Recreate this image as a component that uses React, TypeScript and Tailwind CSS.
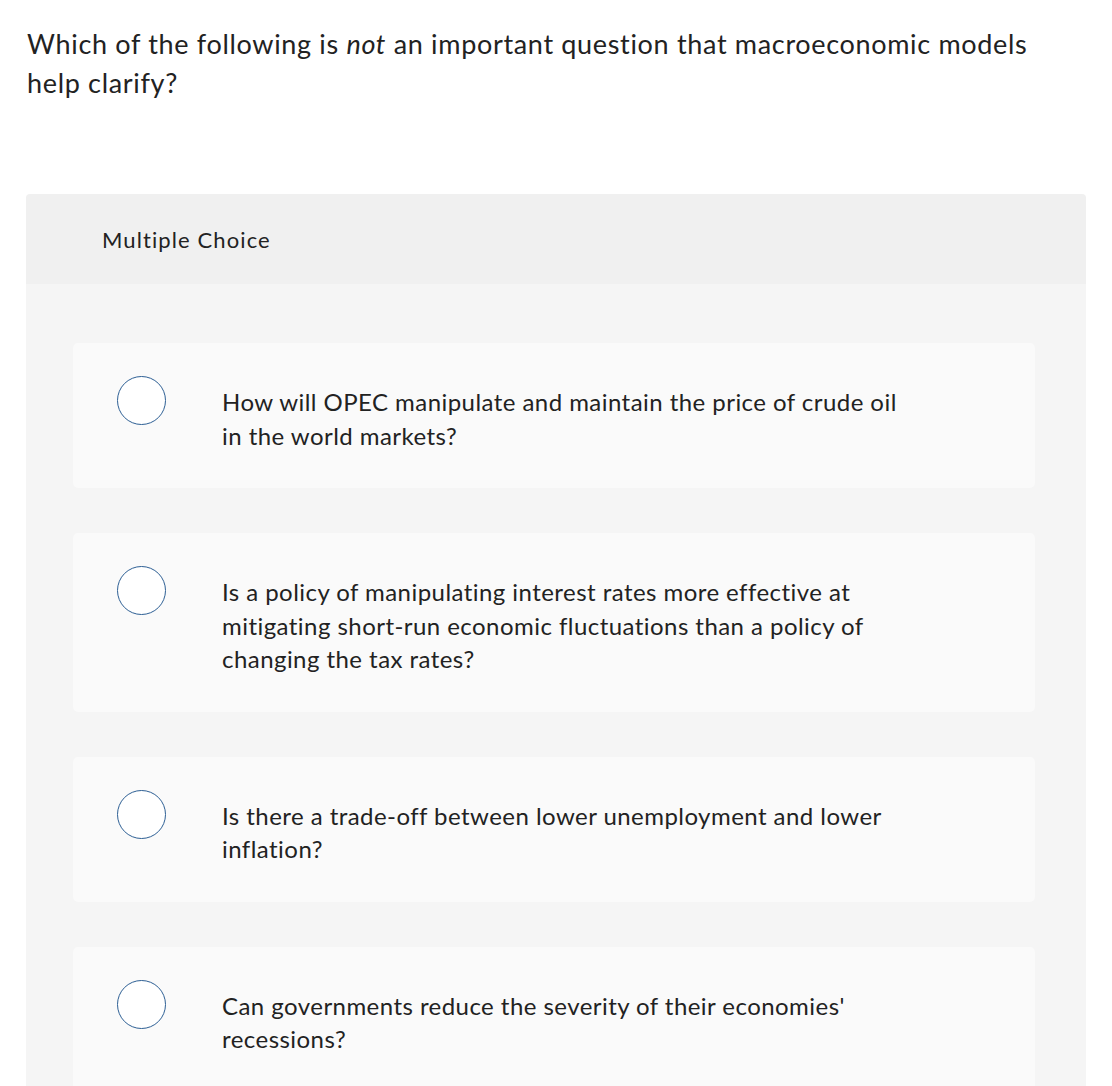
const options = [
  "How will OPEC manipulate and maintain the price of crude oil in the world markets?",
  "Is a policy of manipulating interest rates more effective at mitigating short-run economic fluctuations than a policy of changing the tax rates?",
  "Is there a trade-off between lower unemployment and lower inflation?",
  "Can governments reduce the severity of their economies' recessions?",
];

function Radio() {
  return (
    <span className="block w-[49px] h-[49px] shrink-0 rounded-full border-[1.5px] border-[#2d5f94] bg-white" />
  );
}

export default function App() {
  return (
    <div
      className="bg-white min-h-screen text-[#222222]"
      style={{ fontFamily: "Lato, 'Liberation Sans', sans-serif" }}
    >
      <p className="pl-[27px] pr-[40px] pt-[24px] text-[27px] leading-[39px] tracking-[0.67px]">
        Which of the following is <i>not</i> an important question that macroeconomic models help clarify?
      </p>

      <div className="mx-[26px] mt-[92px] rounded-t-[4px] overflow-hidden">
        <div className="h-[90px] bg-[#f0f0f0] flex items-center pl-[76px] text-[22px] tracking-[1.1px]">
          Multiple Choice
        </div>
        <div className="bg-[#f5f5f5] pl-[47px] pr-[51px] pt-[59px] pb-[60px] flex flex-col gap-[45px]">
          {options.map((text) => (
            <label
              key={text}
              className="flex items-start rounded-[5px] bg-[#fafafa] pl-[44px] pr-[40px] pt-[33px] pb-[36px] cursor-pointer"
            >
              <Radio />
              <span className="ml-[56px] mt-[9px] max-w-[690px] text-[24px] leading-[33.5px] tracking-[0.45px]">
                {text}
              </span>
            </label>
          ))}
        </div>
      </div>
    </div>
  );
}
